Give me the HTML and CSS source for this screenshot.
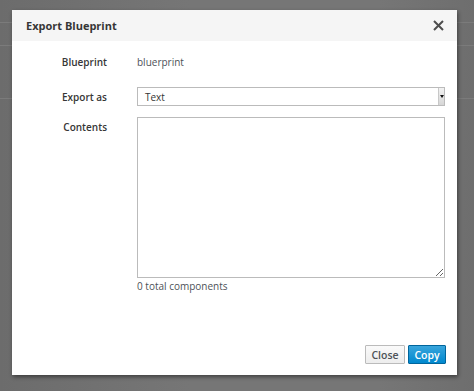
FILE: index.html
```html
<!DOCTYPE html>
<html lang="en">

<head>
    <meta charset="UTF-8">
    <meta name="viewport" content="width=device-width, initial-scale=1.0">
    <title>Export Blueprint</title>
    <link rel="stylesheet" href="styles.css">
</head>

<body>
    <div class="backdrop">
        <div class="modal">
            <!-- Header -->
            <div class="modal-header">
                <h4>Export Blueprint</h4>
                <span class="close-icon">
                    <svg width="11" height="11" viewBox="0 0 11 11">
                        <path d="M1 1 L10 10 M10 1 L1 10" stroke="#4d4d4d" stroke-width="2" fill="none" />
                    </svg>
                </span>
            </div>

            <!-- Body -->
            <div class="modal-body">
                <div class="form-row">
                    <label class="form-label">Blueprint</label>
                    <div class="form-value">bluerprint</div>
                </div>
                <div class="form-row row-select">
                    <label class="form-label">Export as</label>
                    <div class="fake-select">
                        <span>Text</span>
                        <span class="select-arrow"></span>
                    </div>
                </div>
                <div class="form-row row-contents">
                    <label class="form-label label-top">Contents</label>
                    <div>
                        <textarea class="contents-box" readonly></textarea>
                        <p class="help-text">0 total components</p>
                    </div>
                </div>
            </div>

            <!-- Footer -->
            <div class="modal-footer">
                <button class="btn btn-default">Close</button>
                <button class="btn btn-primary">Copy</button>
            </div>
        </div>
    </div>
</body>

</html>
```
FILE: styles.css
```css
html, body {
    margin: 0;
    padding: 0;
}

body {
    background-color: #737373;
    font-family: "Open Sans", "Liberation Sans", sans-serif;
    font-size: 10px;
    color: #363636;
}

.backdrop {
    height: 391px;
    box-sizing: border-box;
    padding: 10px 17px 0 12px;
    background:
        linear-gradient(#7b7b7b, #7b7b7b) 0 22px / 100% 1px no-repeat,
        linear-gradient(#7b7b7b, #7b7b7b) 0 45px / 100% 1px no-repeat,
        linear-gradient(#7b7b7b, #7b7b7b) 0 98px / 100% 1px no-repeat,
        linear-gradient(to right, #6c6c6c, #767676 40%, #767676 80%, #6e6e6e);
}

.modal {
    width: 445px;
    height: 365px;
    background-color: white;
    box-shadow: 1px 2px 4px rgba(0, 0, 0, 0.45);
    display: flex;
    flex-direction: column;
}

.modal-header {
    height: 31px;
    background-color: #f5f5f5;
    display: flex;
    align-items: center;
    justify-content: space-between;
    padding: 0 14px 0 14px;
}

.modal-header h4 {
    margin: 0;
    font-size: 11px;
    font-weight: 700;
    color: #363636;
}

.close-icon {
    display: flex;
    margin-right: -1px;
}

.modal-body {
    flex: 1;
    padding: 12px 12px 0 0;
    display: flex;
    flex-direction: column;
}

.form-row {
    display: grid;
    grid-template-columns: 95px 308px;
    column-gap: 30px;
    align-items: center;
}

.row-select {
    margin-top: 16px;
}

.row-contents {
    margin-top: 11px;
    align-items: start;
}

.form-label {
    text-align: right;
    font-weight: 600;
    line-height: 18px;
}

.label-top {
    margin-top: 1px;
}

.form-value {
    line-height: 18px;
    color: #4d5258;
}

.fake-select {
    height: 19px;
    box-sizing: border-box;
    border: 1px solid #bbb;
    display: flex;
    align-items: center;
    justify-content: space-between;
    padding-left: 7px;
    color: #363636;
}

.select-arrow {
    width: 5px;
    height: 17px;
    background: linear-gradient(#f2f2f2, #d6d6d6);
    border-left: 1px solid #c8c8c8;
    position: relative;
}

.select-arrow::after {
    content: "";
    position: absolute;
    left: 1px;
    top: 7px;
    border-left: 2px solid transparent;
    border-right: 2px solid transparent;
    border-top: 3px solid #111;
}

.contents-box {
    display: block;
    width: 308px;
    height: 161px;
    box-sizing: border-box;
    border: 1px solid #bbb;
    margin: 0;
    padding: 4px;
    font-family: inherit;
    outline: none;
}

.help-text {
    margin: 1px 0 0 0;
    line-height: 14px;
    color: #4d5258;
}

.modal-footer {
    display: flex;
    justify-content: flex-end;
    gap: 3px;
    padding: 0 11px 11px 0;
}

.btn {
    height: 19px;
    box-sizing: border-box;
    font-family: inherit;
    font-size: 10.5px;
    font-weight: 600;
    padding: 0;
    border-radius: 1px;
    cursor: pointer;
    text-align: center;
}

.btn-default {
    width: 40px;
    background: linear-gradient(#fafafa, #ededed);
    border: 1px solid #bbb;
    color: #4d5258;
}

.btn-primary {
    width: 38px;
    background: linear-gradient(#39a5dc, #0088ce);
    border: 1px solid #00659c;
    color: white;
}
```
